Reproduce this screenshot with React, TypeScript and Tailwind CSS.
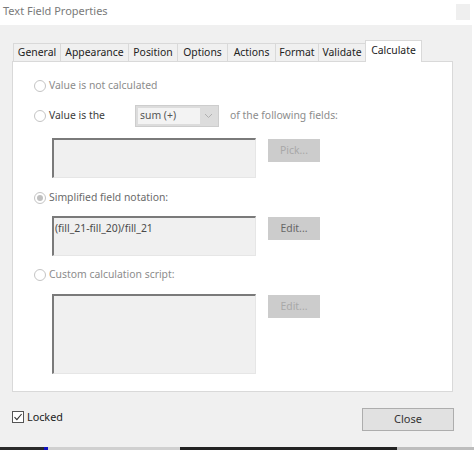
const font = { fontFamily: '"Noto Sans", "Open Sans", sans-serif' };

const tabs = [
  { label: "General", w: "w-[48px]" },
  { label: "Appearance", w: "w-[69px]" },
  { label: "Position", w: "w-[50px]" },
  { label: "Options", w: "w-[51px]" },
  { label: "Actions", w: "w-[49px]" },
  { label: "Format", w: "w-[44px]" },
  { label: "Validate", w: "w-[48px]" },
];

const Radio = ({ checked = false }: { checked?: boolean }) => (
  <span className="flex h-[12px] w-[12px] shrink-0 items-center justify-center rounded-full border border-[#c4c4c4] bg-white">
    {checked && <span className="h-[6px] w-[6px] rounded-full bg-[#c0c0c0]" />}
  </span>
);

const Box = ({ h, children }: { h: string; children?: React.ReactNode }) => (
  <div
    className={`${h} w-[204px] border-l-2 border-t-2 border-r border-b border-l-[#7a7a7a] border-t-[#7a7a7a] border-r-[#e6e6e6] border-b-[#e6e6e6] bg-[#f0f0f0] px-[1px] pt-[5px] text-[10.4px] leading-none text-[#4a4a4a]`}
  >
    {children}
  </div>
);

const SideButton = ({ label, enabled = false }: { label: string; enabled?: boolean }) => (
  <div
    className={`mt-[1px] flex h-[23px] w-[52px] items-center justify-center bg-[#cccccc] text-[10.4px] ${
      enabled ? "text-[#666666]" : "text-[#a8a8a8]"
    }`}
  >
    {label}
  </div>
);

export default function App() {
  return (
    <div className="flex h-[450px] w-[474px] flex-col overflow-hidden bg-white" style={font}>
      {/* title bar */}
      <div className="flex h-[25px] shrink-0 items-start justify-between bg-white">
        <span className="pl-[3px] pt-[3px] text-[11px] text-[#7a7a7a]">Text Field Properties</span>
        <span className="mr-[4px] mt-[4px] h-[16px] w-[14px] bg-[#efefef]" />
      </div>

      {/* dialog body */}
      <div className="mr-[2px] flex flex-1 flex-col bg-[#f0f0f0] pl-[12px] pt-[15px]">
        {/* tab strip */}
        <div className="flex h-[21px] items-end pl-[1px]">
          {tabs.map((t) => (
            <div
              key={t.label}
              className={`${t.w} -mr-px flex h-[18px] items-center justify-center border border-b-0 border-[#d9d9d9] bg-[#f0f0f0] text-[10.4px] text-[#222222]`}
            >
              {t.label}
            </div>
          ))}
          <div className="relative z-10 -mb-px flex h-[22px] w-[57px] items-start justify-center border border-b-0 border-[#d9d9d9] bg-white pt-[2px] text-[10.4px] text-[#222222]">
            Calculate
          </div>
        </div>

        {/* calculate panel */}
        <div className="flex h-[331px] w-[441px] flex-col border border-[#d9d9d9] bg-white pl-[21px] text-[10.4px]">
          <div className="mt-[17px] flex h-[14px] items-center gap-[3px] text-[#8c8c8c]">
            <Radio />
            <span>Value is not calculated</span>
          </div>

          <div className="mt-[12px] flex h-[22px] items-center">
            <Radio />
            <span className="ml-[3px] w-[86px] text-[#3c3c3c]">Value is the</span>
            <div className="flex h-[22px] w-[84px] border border-[#cdcdcd] bg-[#dcdcdc] p-[2px]">
              <div className="flex flex-1 items-center bg-[#f3f3f3] pl-[2px] text-[#555555]">sum (+)</div>
              <div className="flex w-[16px] items-center justify-center">
                <svg width="9" height="6" viewBox="0 0 9 6">
                  <path d="M1 1l3.5 3.5L8 1" fill="none" stroke="#b0b0b0" strokeWidth="1" />
                </svg>
              </div>
            </div>
            <span className="ml-[11px] text-[#8c8c8c]">of the following fields:</span>
          </div>

          <div className="ml-[18px] mt-[11px] flex gap-[12px]">
            <Box h="h-[40px]" />
            <SideButton label="Pick..." />
          </div>

          <div className="mt-[13px] flex h-[14px] items-center gap-[3px] text-[#6a6a6a]">
            <Radio checked />
            <span>Simplified field notation:</span>
          </div>

          <div className="ml-[18px] mt-[11px] flex gap-[12px]">
            <Box h="h-[40px]">(fill_21-fill_20)/fill_21</Box>
            <SideButton label="Edit..." enabled />
          </div>

          <div className="mt-[12px] flex h-[14px] items-center gap-[3px] text-[#8c8c8c]">
            <Radio />
            <span>Custom calculation script:</span>
          </div>

          <div className="ml-[18px] mt-[12px] flex gap-[12px]">
            <Box h="h-[80px]" />
            <SideButton label="Edit..." />
          </div>
        </div>

        {/* footer */}
        <div className="mr-[18px] mt-[16px] flex items-start justify-between">
          <div className="mt-[1px] flex items-center gap-[3px] text-[10.8px] text-[#222222]">
            <span className="flex h-[12px] w-[12px] items-center justify-center border border-[#555555] bg-white">
              <svg width="10" height="10" viewBox="0 0 10 10">
                <path d="M1.5 5.2l2.4 2.4L8.6 2" fill="none" stroke="#333333" strokeWidth="1.1" />
              </svg>
            </span>
            <span>Locked</span>
          </div>
          <div className="flex h-[23px] w-[92px] items-center justify-center border border-[#adadad] bg-[#e1e1e1] text-[11px] text-[#333333]">
            Close
          </div>
        </div>
      </div>

      {/* taskbar sliver behind the dialog */}
      <div className="flex h-[3px] shrink-0">
        <div className="w-[44px] bg-[#2a2a2a]" />
        <div className="w-[4px] bg-[#1010c0]" />
        <div className="w-[132px] bg-[#d0d0d0]" />
        <div className="w-[217px] bg-[#222222]" />
        <div className="flex-1 bg-[#bdbdbd]" />
      </div>
    </div>
  );
}
